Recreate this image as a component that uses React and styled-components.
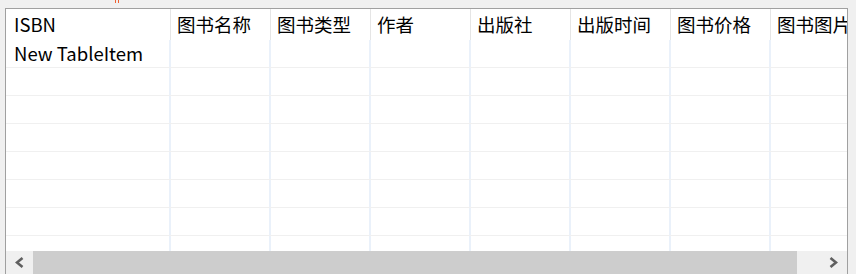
import React from 'react'
import styled, { createGlobalStyle } from 'styled-components'

const GlobalStyle = createGlobalStyle`
  html, body {
    margin: 0;
    padding: 0;
    background: #f0f0f0;
    overflow: hidden;
  }
`

const columns = ['ISBN', '图书名称', '图书类型', '作者', '出版社', '出版时间', '图书价格', '图书图片']
const rows = [['New TableItem'], [], [], [], [], [], [], []]

function Chevron({ dir }) {
  const d = dir === 'left' ? 'M7.5 1 L2 5.5 L7.5 10' : 'M1.5 1 L7 5.5 L1.5 10'
  return (
    <svg width='9' height='11' viewBox='0 0 9 11'>
      <path d={d} fill='none' stroke='#606060' strokeWidth='2.6' />
    </svg>
  )
}

export default function App() {
  return (
    <Page>
      <GlobalStyle />
      <TopStrip>
        <Tick />
        <Tick />
      </TopStrip>
      <Frame>
        <Viewport>
          <HeaderRow>
            {columns.map((c, i) => (
              <HeadCell key={c} $first={i === 0}>{c}</HeadCell>
            ))}
          </HeaderRow>
          {rows.map((r, ri) => (
            <Row key={ri}>
              {columns.map((c, i) => (
                <Cell key={c} $first={i === 0}>{r[i] || ''}</Cell>
              ))}
            </Row>
          ))}
        </Viewport>
        <ScrollBar>
          <ArrowButton><Chevron dir='left' /></ArrowButton>
          <Track>
            <Thumb />
          </Track>
          <ArrowButton><Chevron dir='right' /></ArrowButton>
        </ScrollBar>
      </Frame>
    </Page>
  )
}

const Page = styled.div`
  width: 856px;
  height: 274px;
  overflow: hidden;
  font-family: "Noto Sans CJK SC", "Noto Sans", sans-serif;
`

const TopStrip = styled.div`
  height: 8px;
  display: flex;
  gap: 2px;
  padding-left: 115px;
`

const Tick = styled.span`
  width: 1px;
  height: 3px;
  background: #f06030;
`

const Frame = styled.div`
  margin-left: 5px;
  width: 841px;
  height: 270px;
  border: 1px solid #a0a0a0;
  border-bottom: none;
  background: #fff;
  display: flex;
  flex-direction: column;
`

const Viewport = styled.div`
  height: 242px;
  overflow: hidden;
  background: #fff;
`

const gridCols = '165px repeat(7, 100px)'

const HeaderRow = styled.div`
  display: grid;
  grid-template-columns: ${gridCols};
  height: 31px;
`

const HeadCell = styled.div`
  box-sizing: border-box;
  border-right: 1px solid #e5e5e5;
  padding: 3px 0 0 ${p => (p.$first ? '8px' : '6px')};
  font-size: 18.5px;
  line-height: 24px;
  color: #000;
  white-space: nowrap;
  overflow: hidden;
`

const Row = styled.div`
  display: grid;
  grid-template-columns: ${gridCols};
  height: 28px;
  box-sizing: border-box;
  border-bottom: 1px solid #f0f0f0;
`

const Cell = styled.div`
  box-sizing: border-box;
  border-right: 2px solid #eaf1fa;
  padding: 1px 0 0 ${p => (p.$first ? '8px' : '6px')};
  font-size: 18.5px;
  line-height: 24px;
  color: #000;
  white-space: nowrap;
  overflow: hidden;
`

const ScrollBar = styled.div`
  display: flex;
  height: 24px;
  background: #f0f0f0;
`

const ArrowButton = styled.div`
  width: 27px;
  display: flex;
  align-items: center;
  justify-content: center;
  padding-bottom: 2px;
`

const Track = styled.div`
  flex: 1;
  display: flex;
`

const Thumb = styled.div`
  width: 764px;
  background: #cdcdcd;
`
